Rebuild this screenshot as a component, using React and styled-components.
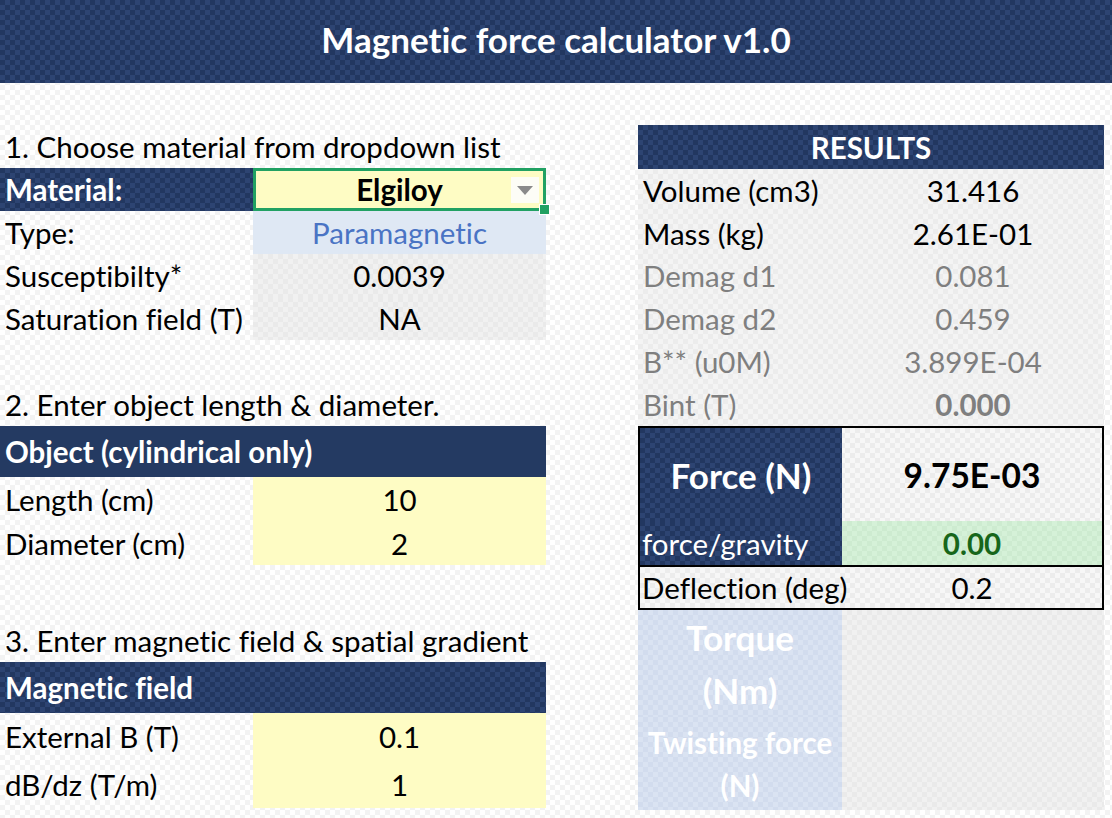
import React from 'react';
import styled, { createGlobalStyle, css } from 'styled-components';

const checker = (base, square, size = 5) => css`
  background-color: ${base};
  background-image: conic-gradient(${square} 25%, transparent 0 50%, ${square} 0 75%, transparent 0);
  background-size: ${size * 2}px ${size * 2}px;
`;

const navy = checker('#223760', '#2d4472');
const TEXT = 29.5;

const GlobalStyle = createGlobalStyle`
  html, body {
    margin: 0;
    padding: 0;
  }
  body {
    font-family: Lato, "Open Sans", sans-serif;
    font-variant-ligatures: none;
    font-feature-settings: "liga" 0, "dlig" 0;
    width: 1112px;
    height: 818px;
    overflow: hidden;
  }
`;

const Page = styled.div`
  width: 1112px;
  height: 818px;
  ${checker('#ffffff', '#f3f3f3')}
`;

const TitleBar = styled.header`
  height: 83px;
  display: flex;
  align-items: center;
  justify-content: center;
  color: #fff;
  font-weight: 700;
  font-size: 35px;
  padding-bottom: 6px;
  box-sizing: border-box;
  ${navy}
`;

const Main = styled.main`
  display: flex;
  gap: 92px;
  padding-top: 42px;
`;

const Column = styled.section`
  display: flex;
  flex-direction: column;
  width: ${(p) => p.$width}px;
`;

const Heading = styled.div`
  height: ${(p) => p.$h || 43}px;
  display: flex;
  align-items: center;
  padding-left: 5px;
  font-size: ${TEXT}px;
  color: #000;
  margin-top: ${(p) => p.$gap || 0}px;
  white-space: nowrap;
`;

const Row = styled.div`
  display: grid;
  grid-template-columns: ${(p) => p.$cols};
  height: ${(p) => p.$h || 43}px;
`;

const Label = styled.div`
  display: flex;
  align-items: center;
  padding-left: ${(p) => (p.$tight ? 2 : 5)}px;
  font-size: ${TEXT}px;
  color: ${(p) => (p.$muted ? '#7f7f7f' : '#000')};
  white-space: nowrap;
`;

const NavyLabel = styled(Label)`
  color: #fff;
  font-weight: ${(p) => (p.$bold ? 700 : 400)};
  ${navy}
`;

const BandHeader = styled.div`
  height: ${(p) => p.$h || 51}px;
  display: flex;
  align-items: center;
  justify-content: ${(p) => (p.$center ? 'center' : 'flex-start')};
  padding-left: ${(p) => (p.$center ? 0 : 5)}px;
  color: #fff;
  font-weight: 700;
  font-size: ${TEXT}px;
  white-space: nowrap;
  ${(p) => (p.$solid ? css`background: #243a62;` : navy)}
`;

const Value = styled.div`
  display: flex;
  align-items: center;
  justify-content: center;
  font-size: ${(p) => p.$size || TEXT}px;
  color: ${(p) => p.$color || '#000'};
  font-weight: ${(p) => (p.$bold ? 700 : 400)};
  white-space: nowrap;
  ${(p) => p.$bg === 'yellow' && css`background: #fefcc4;`}
  ${(p) => p.$bg === 'blue' && css`background: #dfe8f4;`}
  ${(p) => p.$bg === 'gray' && checker('#f1f1f1', '#eaeaea')}
  ${(p) => p.$bg === 'green' && checker('#d5f1d8', '#cdebd0')}
`;

const SelectCell = styled.div`
  position: relative;
  display: flex;
  align-items: center;
  justify-content: center;
  background: #fefcc4;
  font-size: ${TEXT}px;
  font-weight: 700;
  box-shadow: inset 0 0 0 3px #21a163;
`;

const DropButton = styled.span`
  position: absolute;
  right: 7px;
  top: 9px;
  width: 28px;
  height: 26px;
  background: #fdfdf6;
  display: flex;
  align-items: center;
  justify-content: center;
`;

const Handle = styled.span`
  position: absolute;
  right: -4px;
  bottom: -4px;
  width: 9px;
  height: 9px;
  background: #21a163;
  border: 1px solid #fff;
`;

const ResultsBody = styled.div`
  ${checker('#f4f4f4', '#ececec')}
`;

const ForceBox = styled.div`
  border: 2px solid #000;
  box-sizing: border-box;
  ${checker('#f7f7f7', '#ececec')}
`;

const ForceLabel = styled.div`
  display: flex;
  align-items: center;
  justify-content: center;
  color: #fff;
  font-weight: 700;
  font-size: 35px;
  ${navy}
`;

const Divider = styled.div`
  border-top: 2px solid #000;
`;

const TorqueLabel = styled.div`
  display: flex;
  align-items: center;
  justify-content: center;
  text-align: center;
  color: #fff;
  font-weight: 700;
  font-size: ${(p) => p.$size}px;
  line-height: ${(p) => p.$lh}px;
  ${checker('#dae3f2', '#d2dcee')}
`;

const LEFT = '253px 293px';
const RIGHT = '204px 262px';
const BOXED = '202px 260px';

const Caret = () => (
  <svg width="16" height="9" viewBox="0 0 16 9">
    <path d="M0 0 H16 L8 9 Z" fill="#8a8a8a" />
  </svg>
);

export default function App() {
  return (
    <Page>
      <GlobalStyle />
      <TitleBar>Magnetic force calculator v1.0</TitleBar>
      <Main>
        <Column $width={546}>
          <Heading>1. Choose material from dropdown list</Heading>
          <Row $cols={LEFT}>
            <NavyLabel $bold>Material:</NavyLabel>
            <SelectCell>
              Elgiloy
              <DropButton><Caret /></DropButton>
              <Handle />
            </SelectCell>
          </Row>
          <Row $cols={LEFT}>
            <Label>Type:</Label>
            <Value $bg="blue" $color="#4a74c4">Paramagnetic</Value>
          </Row>
          <Row $cols={LEFT}>
            <Label>Susceptibilty*</Label>
            <Value $bg="gray">0.0039</Value>
          </Row>
          <Row $cols={LEFT}>
            <Label>Saturation field (T)</Label>
            <Value $bg="gray">NA</Value>
          </Row>

          <Heading $gap={43}>2. Enter object length &amp; diameter.</Heading>
          <BandHeader $solid>Object (cylindrical only)</BandHeader>
          <Row $cols={LEFT} $h={44}>
            <Label>Length (cm)</Label>
            <Value $bg="yellow">10</Value>
          </Row>
          <Row $cols={LEFT} $h={44}>
            <Label>Diameter (cm)</Label>
            <Value $bg="yellow">2</Value>
          </Row>

          <Heading $gap={53} $h={44}>3. Enter magnetic field &amp; spatial gradient</Heading>
          <BandHeader>Magnetic field</BandHeader>
          <Row $cols={LEFT} $h={47}>
            <Label>External B (T)</Label>
            <Value $bg="yellow">0.1</Value>
          </Row>
          <Row $cols={LEFT} $h={48}>
            <Label>dB/dz (T/m)</Label>
            <Value $bg="yellow">1</Value>
          </Row>
        </Column>

        <Column $width={466}>
          <BandHeader $center $h={44}>RESULTS</BandHeader>
          <ResultsBody>
            <Row $cols={RIGHT}>
              <Label>Volume (cm3)</Label>
              <Value>31.416</Value>
            </Row>
            <Row $cols={RIGHT} $h={42}>
              <Label>Mass (kg)</Label>
              <Value>2.61E-01</Value>
            </Row>
            <Row $cols={RIGHT}>
              <Label $muted>Demag d1</Label>
              <Value $color="#7f7f7f">0.081</Value>
            </Row>
            <Row $cols={RIGHT}>
              <Label $muted>Demag d2</Label>
              <Value $color="#7f7f7f">0.459</Value>
            </Row>
            <Row $cols={RIGHT}>
              <Label $muted>B** (u0M)</Label>
              <Value $color="#7f7f7f">3.899E-04</Value>
            </Row>
            <Row $cols={RIGHT}>
              <Label $muted>Bint (T)</Label>
              <Value $color="#7f7f7f" $bold>0.000</Value>
            </Row>
          </ResultsBody>
          <ForceBox>
            <Row $cols={BOXED} $h={93}>
              <ForceLabel>Force (N)</ForceLabel>
              <Value $bold $size={33.5}>9.75E-03</Value>
            </Row>
            <Row $cols={BOXED} $h={44}>
              <NavyLabel $tight>force/gravity</NavyLabel>
              <Value $bg="green" $color="#17661b" $bold>0.00</Value>
            </Row>
            <Divider />
            <Row $cols={BOXED} $h={41}>
              <Label $tight>Deflection (deg)</Label>
              <Value>0.2</Value>
            </Row>
          </ForceBox>
          <ResultsBody>
            <Row $cols={RIGHT} $h={107}>
              <TorqueLabel $size={35} $lh={53}>Torque<br />(Nm)</TorqueLabel>
              <Value $bg="gray" />
            </Row>
            <Row $cols={RIGHT} $h={93}>
              <TorqueLabel $size={TEXT} $lh={43}>Twisting force<br />(N)</TorqueLabel>
              <Value $bg="gray" />
            </Row>
          </ResultsBody>
        </Column>
      </Main>
    </Page>
  );
}
